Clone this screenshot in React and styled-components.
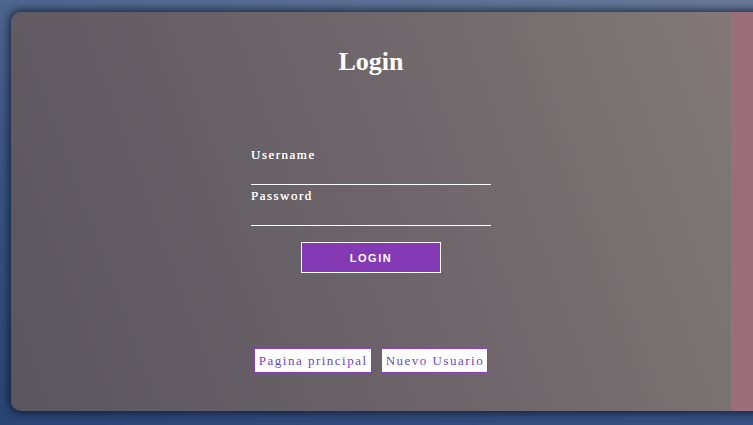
import styled, { createGlobalStyle } from 'styled-components';

const GlobalStyle = createGlobalStyle`
  html, body {
    margin: 0;
    padding: 0;
  }

  body {
    font-family: 'Liberation Serif', 'Times New Roman', serif;
    background: linear-gradient(15deg, #2a4474 0%, #3c5686 45%, #6a7b9a 100%);
    overflow: hidden;
  }
`;

const Page = styled.div`
  height: 425px;
  padding: 12px 0 0 11px;
  box-sizing: border-box;
  overflow: hidden;
`;

const Card = styled.div`
  width: 800px;
  height: 399px;
  display: flex;
  border-radius: 10px;
  overflow: hidden;
  box-shadow: 0 0 8px 2px rgba(10, 18, 35, 0.75);
`;

const MainPanel = styled.section`
  width: 720px;
  flex-shrink: 0;
  display: flex;
  flex-direction: column;
  align-items: center;
  background: linear-gradient(70deg, #5b5560 0%, #6c6469 50%, #817877 100%);
`;

const SidePanel = styled.aside`
  flex: 1;
  background-color: #9b6f7a;
`;

const Title = styled.h1`
  margin: 35px 0 0 0;
  font-size: 26px;
  line-height: 30px;
  font-weight: bold;
  color: #ffffff;
`;

const Form = styled.form`
  width: 240px;
  margin-top: 70px;
  display: flex;
  flex-direction: column;
`;

const Field = styled.label`
  display: flex;
  flex-direction: column;
  margin-bottom: 3px;

  span {
    font-size: 13px;
    line-height: 16px;
    letter-spacing: 1.5px;
    color: #ffffff;
    text-shadow: 0 0 0.4px #ffffff;
  }

  input {
    height: 21px;
    padding: 0;
    border: none;
    border-bottom: 1px solid #ffffff;
    background: transparent;
    outline: none;
    color: #ffffff;
    font-family: 'Liberation Serif', serif;
    font-size: 13px;
  }
`;

const SubmitButton = styled.button`
  align-self: center;
  width: 140px;
  height: 31px;
  margin-top: 13px;
  border: 1px solid #ffffff;
  background-color: #8439b5;
  color: #ffffff;
  font-family: 'Liberation Sans', Arial, sans-serif;
  font-size: 11px;
  font-weight: bold;
  letter-spacing: 1.5px;
  cursor: pointer;
`;

const Links = styled.nav`
  margin-top: 75px;
  display: flex;
  gap: 9px;
`;

const LinkButton = styled.a`
  display: block;
  height: 25px;
  line-height: 23px;
  box-sizing: border-box;
  padding: 0 3px 0 4px;
  border: 1px solid #8a3dc6;
  background-color: #ffffff;
  color: #6b46b8;
  font-size: 13px;
  letter-spacing: 1.5px;
  text-decoration: none;
`;

const App = () => {
  return (
    <>
      <GlobalStyle />
      <Page>
        <Card>
          <MainPanel>
            <Title>Login</Title>
            <Form onSubmit={(e) => e.preventDefault()}>
              <Field>
                <span>Username</span>
                <input type='text' />
              </Field>
              <Field>
                <span>Password</span>
                <input type='password' />
              </Field>
              <SubmitButton type='submit'>LOGIN</SubmitButton>
            </Form>
            <Links>
              <LinkButton href='#'>Pagina principal</LinkButton>
              <LinkButton href='#'>Nuevo Usuario</LinkButton>
            </Links>
          </MainPanel>
          <SidePanel />
        </Card>
      </Page>
    </>
  );
};

export default App;
